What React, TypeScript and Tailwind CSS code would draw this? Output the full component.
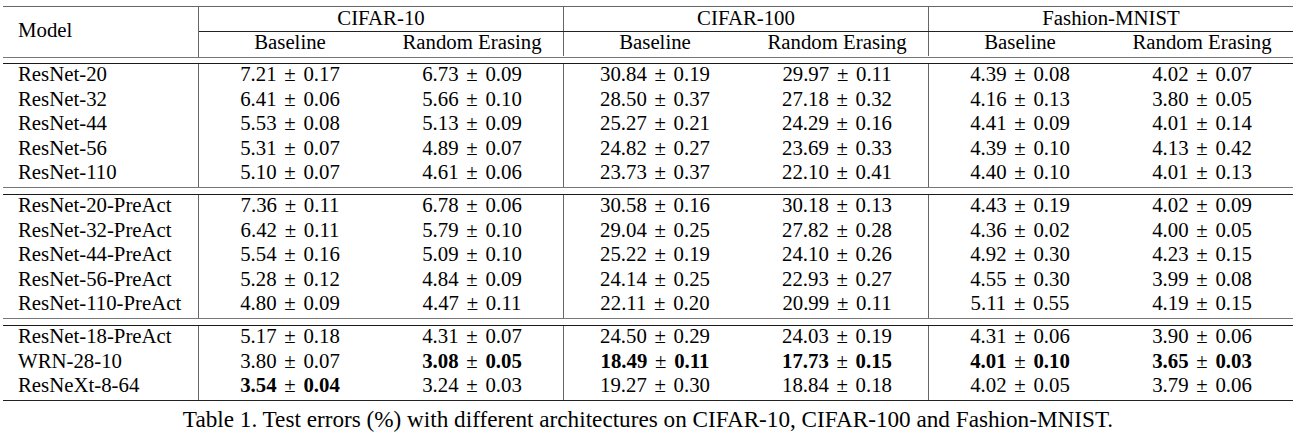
import React from "react"

type Cell = { v: string; bold?: boolean }

const c = (s: string, bold = false): Cell => ({ v: s, bold })

const sections: { model: string; vals: Cell[] }[][] = [
  [
    { model: "ResNet-20", vals: [c("7.21 ± 0.17"), c("6.73 ± 0.09"), c("30.84 ± 0.19"), c("29.97 ± 0.11"), c("4.39 ± 0.08"), c("4.02 ± 0.07")] },
    { model: "ResNet-32", vals: [c("6.41 ± 0.06"), c("5.66 ± 0.10"), c("28.50 ± 0.37"), c("27.18 ± 0.32"), c("4.16 ± 0.13"), c("3.80 ± 0.05")] },
    { model: "ResNet-44", vals: [c("5.53 ± 0.08"), c("5.13 ± 0.09"), c("25.27 ± 0.21"), c("24.29 ± 0.16"), c("4.41 ± 0.09"), c("4.01 ± 0.14")] },
    { model: "ResNet-56", vals: [c("5.31 ± 0.07"), c("4.89 ± 0.07"), c("24.82 ± 0.27"), c("23.69 ± 0.33"), c("4.39 ± 0.10"), c("4.13 ± 0.42")] },
    { model: "ResNet-110", vals: [c("5.10 ± 0.07"), c("4.61 ± 0.06"), c("23.73 ± 0.37"), c("22.10 ± 0.41"), c("4.40 ± 0.10"), c("4.01 ± 0.13")] },
  ],
  [
    { model: "ResNet-20-PreAct", vals: [c("7.36 ± 0.11"), c("6.78 ± 0.06"), c("30.58 ± 0.16"), c("30.18 ± 0.13"), c("4.43 ± 0.19"), c("4.02 ± 0.09")] },
    { model: "ResNet-32-PreAct", vals: [c("6.42 ± 0.11"), c("5.79 ± 0.10"), c("29.04 ± 0.25"), c("27.82 ± 0.28"), c("4.36 ± 0.02"), c("4.00 ± 0.05")] },
    { model: "ResNet-44-PreAct", vals: [c("5.54 ± 0.16"), c("5.09 ± 0.10"), c("25.22 ± 0.19"), c("24.10 ± 0.26"), c("4.92 ± 0.30"), c("4.23 ± 0.15")] },
    { model: "ResNet-56-PreAct", vals: [c("5.28 ± 0.12"), c("4.84 ± 0.09"), c("24.14 ± 0.25"), c("22.93 ± 0.27"), c("4.55 ± 0.30"), c("3.99 ± 0.08")] },
    { model: "ResNet-110-PreAct", vals: [c("4.80 ± 0.09"), c("4.47 ± 0.11"), c("22.11 ± 0.20"), c("20.99 ± 0.11"), c("5.11 ± 0.55"), c("4.19 ± 0.15")] },
  ],
  [
    { model: "ResNet-18-PreAct", vals: [c("5.17 ± 0.18"), c("4.31 ± 0.07"), c("24.50 ± 0.29"), c("24.03 ± 0.19"), c("4.31 ± 0.06"), c("3.90 ± 0.06")] },
    { model: "WRN-28-10", vals: [c("3.80 ± 0.07"), c("3.08 ± 0.05", true), c("18.49 ± 0.11", true), c("17.73 ± 0.15", true), c("4.01 ± 0.10", true), c("3.65 ± 0.03", true)] },
    { model: "ResNeXt-8-64", vals: [c("3.54 ± 0.04", true), c("3.24 ± 0.03"), c("19.27 ± 0.30"), c("18.84 ± 0.18"), c("4.02 ± 0.05"), c("3.79 ± 0.06")] },
  ],
]

// mean ± std; bold entries keep a regular-weight ±, spaced like math mode
function Value({ cell }: { cell: Cell }) {
  const [a, b] = cell.v.split(" ± ")
  const pm = <span className="mx-[2.5px] font-normal">±</span>
  if (!cell.bold)
    return (
      <>
        {a} {pm} {b}
      </>
    )
  return (
    <>
      <b className="font-bold">{a}</b> {pm} <b className="font-bold">{b}</b>
    </>
  )
}

function DoubleRule({ gap }: { gap: string }) {
  return (
    <div>
      <div className="h-px bg-[#777]" />
      <div className={gap} />
      <div className="h-px bg-[#1a1a1a]" />
    </div>
  )
}

export default function App() {
  const groups = ["CIFAR-10", "CIFAR-100", "Fashion-MNIST"]

  return (
    <div className="w-[1307px] h-[448px] bg-white overflow-hidden">
      <div className="ml-[3px] mt-[6px] w-[1290px] font-['Liberation_Serif',serif] text-[20.8px] leading-[20px] text-black">
        <div className="h-px bg-[#666]" />

        {/* Header */}
        <div className="flex h-[50px]">
          <div className="w-[196px] border-r border-[#666] pl-[15px] pt-[13px]">Model</div>
          <div className="flex-1 flex flex-col">
            <div className="flex h-[25px] border-b border-[#222]">
              {groups.map((g, i) => (
                <div
                  key={g}
                  className={`text-center pt-[1px] ${i < 2 ? "w-[365px] border-r border-[#666]" : "w-[364px]"}`}
                >
                  {g}
                </div>
              ))}
            </div>
            <div className="flex h-[24px]">
              {[0, 1, 2, 3, 4, 5].map((i) => (
                <div
                  key={i}
                  className={`text-center ${i === 1 || i === 3 ? "w-[183px] border-r border-[#666]" : "w-[182px]"}`}
                >
                  {i % 2 === 0 ? "Baseline" : "Random Erasing"}
                </div>
              ))}
            </div>
          </div>
        </div>

        {sections.map((rows, si) => (
          <div key={si}>
            <DoubleRule gap={si === 0 ? "h-[5px]" : "h-[6px]"} />
            {rows.map((r) => (
              <div key={r.model} className="flex h-[24.6px]">
                <div className="w-[196px] border-r border-[#666] pl-[15px]">{r.model}</div>
                {r.vals.map((v, i) => (
                  <div
                    key={i}
                    className={`text-center ${i === 1 || i === 3 ? "w-[183px] border-r border-[#666]" : "w-[182px]"}`}
                  >
                    <Value cell={v} />
                  </div>
                ))}
              </div>
            ))}
          </div>
        ))}

        <div className="h-px bg-[#222]" />

        <p className="mt-[8px] text-center text-[23.2px]">
          Table 1. Test errors (%) with different architectures on CIFAR-10, CIFAR-100 and Fashion-MNIST.
        </p>
      </div>
    </div>
  )
}
